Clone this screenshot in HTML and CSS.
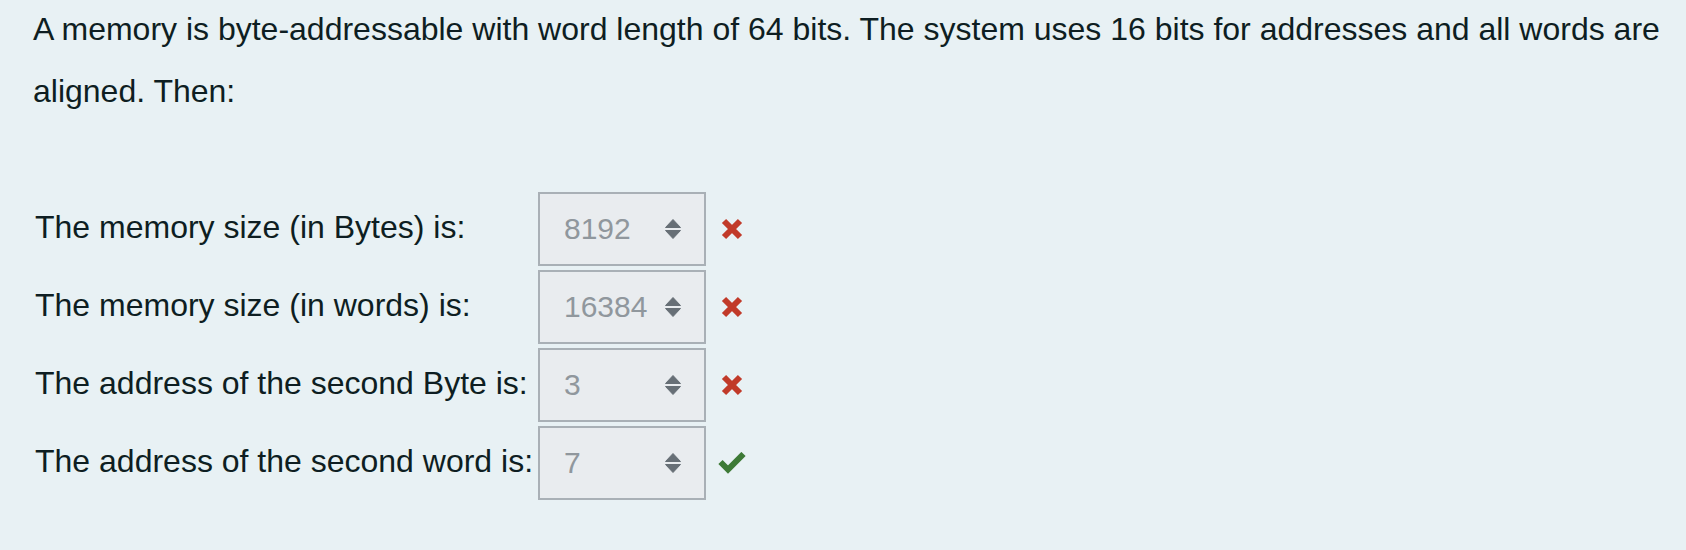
FILE: index.html
```html
<!DOCTYPE html>
<html lang="en">
<head>
<meta charset="utf-8">
<title>Memory question</title>
<link rel="stylesheet" href="styles.css">
</head>
<body>
<div class="formulation">
  <p class="qtext">A memory is byte-addressable with word length of 64 bits. The system uses 16 bits for addresses and all words are aligned. Then:</p>
  <div class="answers">
    <div class="label">The memory size (in Bytes) is:</div>
    <div class="field"><span class="value">8192</span><svg class="spin" width="16" height="20" viewBox="0 0 16 20"><path d="M8 0.5 L15.5 8.5 L0.5 8.5 Z M0.5 11.5 L15.5 11.5 L8 19.5 Z" fill="#676f76" stroke="#676f76" stroke-width="1" stroke-linejoin="round"/></svg></div>
    <div class="mark"><svg width="22" height="22" viewBox="0 0 22 22"><path d="M3 3 L19 19 M19 3 L3 19" stroke="#c13a29" stroke-width="6" fill="none"/></svg></div>

    <div class="label">The memory size (in words) is:</div>
    <div class="field"><span class="value">16384</span><svg class="spin" width="16" height="20" viewBox="0 0 16 20"><path d="M8 0.5 L15.5 8.5 L0.5 8.5 Z M0.5 11.5 L15.5 11.5 L8 19.5 Z" fill="#676f76" stroke="#676f76" stroke-width="1" stroke-linejoin="round"/></svg></div>
    <div class="mark"><svg width="22" height="22" viewBox="0 0 22 22"><path d="M3 3 L19 19 M19 3 L3 19" stroke="#c13a29" stroke-width="6" fill="none"/></svg></div>

    <div class="label">The address of the second Byte is:</div>
    <div class="field"><span class="value">3</span><svg class="spin" width="16" height="20" viewBox="0 0 16 20"><path d="M8 0.5 L15.5 8.5 L0.5 8.5 Z M0.5 11.5 L15.5 11.5 L8 19.5 Z" fill="#676f76" stroke="#676f76" stroke-width="1" stroke-linejoin="round"/></svg></div>
    <div class="mark"><svg width="22" height="22" viewBox="0 0 22 22"><path d="M3 3 L19 19 M19 3 L3 19" stroke="#c13a29" stroke-width="6" fill="none"/></svg></div>

    <div class="label">The address of the second word is:</div>
    <div class="field"><span class="value">7</span><svg class="spin" width="16" height="20" viewBox="0 0 16 20"><path d="M8 0.5 L15.5 8.5 L0.5 8.5 Z M0.5 11.5 L15.5 11.5 L8 19.5 Z" fill="#676f76" stroke="#676f76" stroke-width="1" stroke-linejoin="round"/></svg></div>
    <div class="mark"><svg width="28" height="22" viewBox="0 0 28 22"><path d="M2.5 10 L10 17.5 L25.5 2" stroke="#3d7a36" stroke-width="6" fill="none" stroke-linejoin="miter"/></svg></div>
  </div>
</div>
</body>
</html>
```

FILE: styles.css
```css
html, body {
  margin: 0;
  padding: 0;
  background: #e8f1f4;
}

body {
  font-family: "Liberation Sans", Arial, Helvetica, sans-serif;
  font-size: 32px;
  color: #0e1e22;
}

.formulation {
  padding: 0 20px 0 33px;
  height: 550px;
  box-sizing: border-box;
}

.qtext {
  margin: -2px 0 0 0;
  line-height: 62px;
}

.answers {
  margin-top: 70px;
  padding-left: 2px;
  display: grid;
  grid-template-columns: 503px 168px 28px;
  column-gap: 0;
  row-gap: 4px;
  align-items: center;
}

.label {
  white-space: nowrap;
  line-height: 45px;
  padding-bottom: 4px;
}

.field {
  box-sizing: border-box;
  height: 74px;
  border: 2px solid #a9b0b6;
  background: #e9ecef;
  display: flex;
  align-items: center;
  justify-content: space-between;
  padding: 0 23px 2px 24px;
  font-size: 30px;
  line-height: 45px;
}

.value {
  color: #90979d;
}

.spin {
  display: block;
  margin-top: 2px;
}

.mark {
  display: flex;
  justify-content: center;
  align-items: center;
  margin-left: 12px;
  width: 28px;
}
```
